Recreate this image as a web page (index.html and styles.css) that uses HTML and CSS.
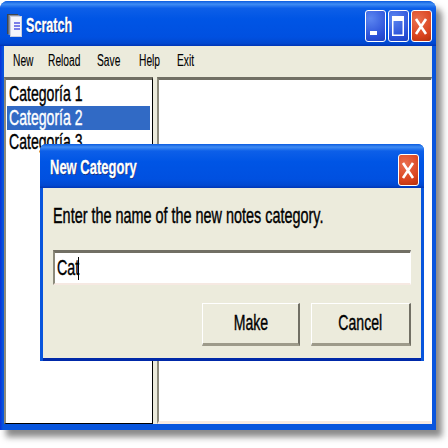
FILE: index.html
```html
<!DOCTYPE html>
<html lang="en">
<head>
<meta charset="utf-8">
<title>Scratch</title>
<link rel="stylesheet" href="styles.css">
</head>
<body>
<div class="window">
  <header class="titlebar main-title">
    <svg class="app-icon" width="15" height="23" viewBox="0 0 15 23">
      <rect x="0" y="0" width="11" height="20" fill="#3f4650"/>
      <rect x="1.500" y="1" width="11" height="20" fill="#8b909c"/>
      <rect x="3" y="2" width="12" height="21" fill="#c9cfe0"/>
      <rect x="4" y="3" width="10" height="19" fill="#f4f6fc"/>
      <rect x="7" y="8" width="6" height="2" fill="#7a7fe8"/>
      <rect x="7" y="11" width="6" height="2" fill="#7a7fe8"/>
      <rect x="7" y="14" width="6" height="2" fill="#7a7fe8"/>
    </svg>
    <span class="squeeze title-text title-scratch">Scratch</span>
    <div class="controls">
      <button class="ctl ctl-blue" aria-label="Minimize"><svg width="19" height="30" viewBox="0 0 19 30"><rect x="4" y="20" width="7" height="4" fill="#fff"/></svg></button>
      <button class="ctl ctl-blue" aria-label="Maximize"><svg width="19" height="30" viewBox="0 0 19 30"><path d="M3 5h12v20H3z M4.500 10v13.500h9V10z" fill="#fff" fill-rule="evenodd"/></svg></button>
      <button class="ctl ctl-red" aria-label="Close"><svg width="19" height="30" viewBox="0 0 19 30"><path d="M4 8l10 15M14 8L4 23" stroke="#fff" stroke-width="2.600" fill="none"/></svg></button>
    </div>
  </header>
  <div class="client">
    <nav class="menu">
      <span class="squeeze menu-item item-new">New</span>
      <span class="squeeze menu-item item-reload">Reload</span>
      <span class="squeeze menu-item item-save">Save</span>
      <span class="squeeze menu-item item-help">Help</span>
      <span class="squeeze menu-item item-exit">Exit</span>
    </nav>
    <div class="panes">
      <ul class="pane list">
        <li class="row"><span class="squeeze row-text">Categoría 1</span></li>
        <li class="row selected"><span class="squeeze row-text">Categoría 2</span></li>
        <li class="row"><span class="squeeze row-text">Categoría 3</span></li>
      </ul>
      <div class="pane editor"></div>
    </div>
  </div>
</div>

<section class="dialog">
  <header class="titlebar dialog-title">
    <span class="squeeze title-text title-new">New Category</span>
    <div class="controls">
      <button class="ctl ctl-red" aria-label="Close"><svg width="18" height="30" viewBox="0 0 18 30"><path d="M4 8l10 15M14 8L4 23" stroke="#fff" stroke-width="2.600" fill="none"/></svg></button>
    </div>
  </header>
  <div class="dialog-body">
    <p class="prompt"><span class="squeeze prompt-text">Enter the name of the new notes category.</span></p>
    <div class="input"><span class="squeeze input-text">Cat</span><i class="caret"></i></div>
    <div class="actions">
      <button class="btn btn-make"><span class="squeeze btn-text">Make</span></button>
      <button class="btn btn-cancel"><span class="squeeze btn-text">Cancel</span></button>
    </div>
  </div>
</section>
</body>
</html>
```
FILE: styles.css
```css
* { box-sizing: border-box; }
html, body { margin: 0; padding: 0; }
body {
  width: 448px;
  height: 448px;
  background: #fff;
  position: relative;
  overflow: hidden;
  padding-top: 1px;
  font-family: "Liberation Sans", Arial, sans-serif;
  color: #000;
}
.squeeze {
  display: inline-block;
  white-space: nowrap;
  transform-origin: left center;
  transform: scaleX(.74);
  -webkit-text-stroke: .4px currentColor;
}
.window {
  width: 436px;
  height: 429px;
  background: linear-gradient(to right, #0831d9 0, #0855dd 3px, #0855dd 100%);
  border-radius: 8px 8px 0 0;
  box-shadow: 6px 7px 6px rgba(60, 60, 60, .6);
  display: flex;
  flex-direction: column;
}
.titlebar {
  display: flex;
  align-items: center;
  color: #fff;
  background: linear-gradient(to bottom, #0a5be0 0, #3f8cf3 7%, #0d5fe8 16%, #0055e5 40%, #0050e0 80%, #0148d0 94%, #0035b5 100%);
}
.main-title {
  height: 45px;
  flex: none;
  padding: 0 4px 0 7px;
  border-radius: 8px 8px 0 0;
}
.app-icon { flex: none; margin-right: 4px; margin-top: 3px; }
.title-text {
  font-weight: bold;
  font-size: 21px;
  text-shadow: 1px 1px 0 #0a1f70;
  margin-top: 3px;
  -webkit-text-stroke: .3px currentColor;
}
.title-scratch { width: 48px; transform: scaleX(.6); }
.controls { margin-left: auto; display: flex; gap: 2px; margin-top: 5px; }
.ctl {
  width: 21px;
  height: 32px;
  padding: 0;
  border: 1px solid #fff;
  border-radius: 3px;
  display: block;
}
.ctl svg { display: block; }
.ctl-blue { background: radial-gradient(circle at 25% 25%, #5c86f0, #2a50d8 70%, #1d3fc0); }
.ctl-red { background: radial-gradient(circle at 30% 30%, #ea7050, #d9431e 65%, #b5300c); }

.client {
  flex: 1;
  margin: 0 4px 6px;
  background: #ecebdc;
  display: flex;
  flex-direction: column;
  min-height: 0;
}
.menu {
  height: 31px;
  flex: none;
  display: flex;
  align-items: center;
  padding-bottom: 2px;
  font-size: 16px;
}
.menu-item { transform: scaleX(.64); -webkit-text-stroke: .1px currentColor; }
.item-new { margin-left: 9px; width: 35px; }
.item-reload { width: 49px; }
.item-save { width: 42px; }
.item-help { width: 38px; }
.panes { flex: 1; display: flex; gap: 4px; min-height: 0; }
.pane {
  margin: 0;
  background: #fff;
  border-style: solid;
  border-width: 3px 1px 3px 2px;
  border-color: #716f64 #fff #f6e9e2 #8d8b7c;
  list-style: none;
}
.list {
  width: 149px;
  flex: none;
  padding: 2px 2px 0 1px;
  border-right: 1px solid #000;
  border-bottom: 1px solid #000;
}
.editor { flex: 1; }
.row {
  height: 24px;
  line-height: 24px;
  padding-left: 2px;
  font-size: 22px;
}
.row-text { transform: scaleX(.64); }
.selected { background: #316ac5; color: #fff; }

.dialog {
  position: absolute;
  left: 40px;
  top: 144px;
  width: 384px;
  height: 217px;
  background: #0855dd;
  border-radius: 6px 6px 0 0;
  display: flex;
  flex-direction: column;
}
.dialog-title {
  height: 44px;
  flex: none;
  padding: 0 5px 0 10px;
  border-radius: 6px 6px 0 0;
}
.title-new { font-size: 20px; transform: scaleX(.65); width: 100px; }
.dialog-title .controls { margin-top: 7px; }
.dialog-body {
  flex: 1;
  margin: 0 3px 3px;
  background: #ecebdc;
  padding: 0 10px;
  box-shadow: 0 3px 0 #0029a8;
  display: flex;
  flex-direction: column;
}
.prompt {
  margin: 16px 0 0;
  height: 24px;
  line-height: 24px;
  font-size: 22px;
}
.prompt-text { transform: scaleX(.655); }
.input {
  margin-top: 22px;
  height: 35px;
  width: 358px;
  background: #fff;
  border-style: solid;
  border-width: 3px 1px 2px 2px;
  border-color: #716f64 #fff #f6e9e2 #8d8b7c;
  display: flex;
  align-items: center;
  padding-left: 2px;
  font-size: 22px;
}
.input-text { transform: scaleX(.65); width: 21px; }
.caret { width: 1px; height: 23px; background: #000; }
.actions { display: flex; justify-content: flex-end; gap: 11px; margin-top: 18px; width: 358px; }
.btn {
  height: 43px;
  background: #ecebdc;
  border-style: solid;
  border-width: 1px 2px 3px 1px;
  border-color: #fff #716f64 #9d9a8a #fff;
  font-family: inherit;
  font-size: 22px;
  color: #000;
  padding: 0 0 2px;
}
.btn-text { transform-origin: center; transform: scaleX(.64); }
.btn-make { width: 98px; }
.btn-cancel { width: 100px; }
```
